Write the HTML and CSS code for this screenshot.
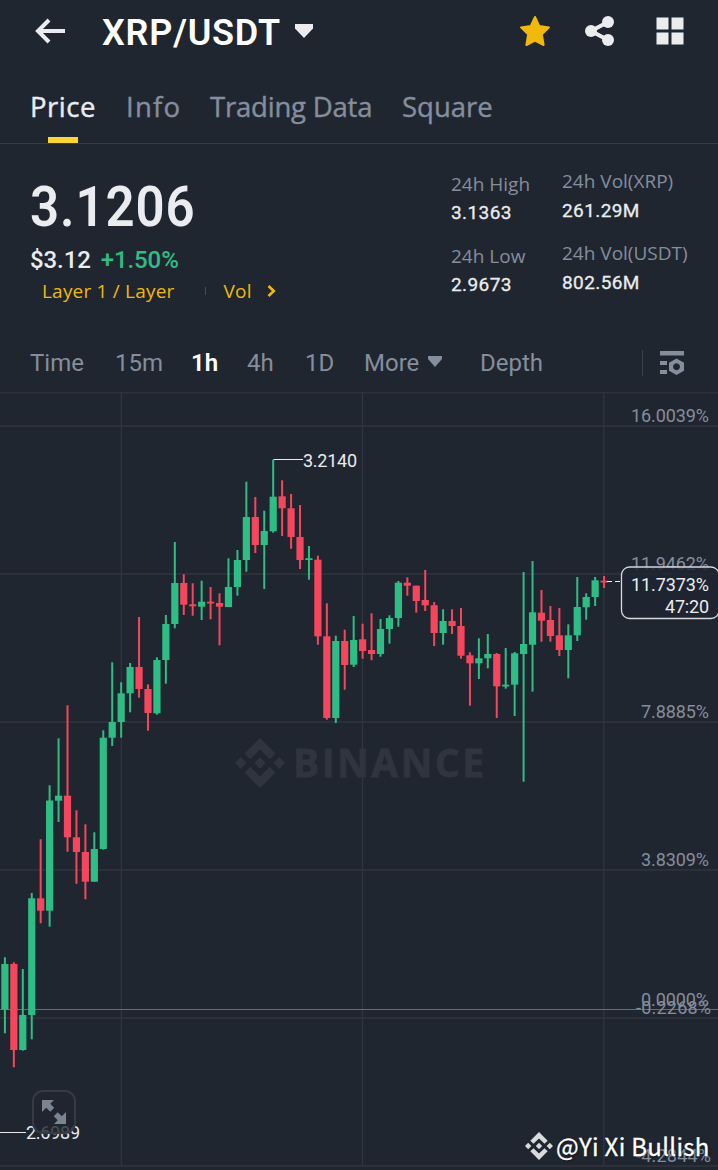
FILE: index.html
```html
<!DOCTYPE html>
<html lang="en">
<head>
    <meta charset="UTF-8">
    <meta name="viewport" content="width=device-width, initial-scale=1.0">
    <title>XRP/USDT</title>
    <link rel="stylesheet" href="styles.css">
</head>
<body>

    <!-- Header -->
    <header class="header">
        <svg class="back" width="32" height="26" viewBox="0 0 32 26">
            <path d="M31 13H4M15 2L4 13L15 24" fill="none" stroke="#eaecef" stroke-width="4"/>
        </svg>
        <h1>XRP/USDT</h1>
        <svg class="caret" width="18" height="14" viewBox="0 0 18 14">
            <path d="M0 0H18V4.5L9 14L0 4.5Z" fill="#eaecef"/>
        </svg>
        <div class="header-icons">
            <svg width="32" height="32" viewBox="0 0 32 32">
                <path d="M16 2L20.2 11L30 12.4L22.9 19.3L24.6 30L16 25.6L7.4 30L9.1 19.3L2 12.4L11.8 11Z" fill="#f0b90b" stroke="#f0b90b" stroke-width="2" stroke-linejoin="round"/>
            </svg>
            <svg width="30" height="30" viewBox="0 0 30 30">
                <path d="M23 6L6 15L23 24" fill="none" stroke="#eaecef" stroke-width="4"/>
                <circle cx="23" cy="6" r="6" fill="#eaecef"/>
                <circle cx="6" cy="15" r="6" fill="#eaecef"/>
                <circle cx="23" cy="24" r="6" fill="#eaecef"/>
            </svg>
            <svg width="28" height="28" viewBox="0 0 28 28">
                <path d="M.5 .5h12v12h-12zM15.5 .5h12v12h-12zM.5 15.5h12v12h-12zM15.5 15.5h12v12h-12z" fill="#eaecef"/>
            </svg>
        </div>
    </header>

    <!-- Tabs -->
    <nav class="tabs">
        <a class="active">Price</a>
        <a class="tab-info">Info</a>
        <a class="tab-trading">Trading Data</a>
        <a>Square</a>
    </nav>

    <!-- Price and 24h stats -->
    <section class="summary">
        <div class="price-box">
            <div class="price">3.1206</div>
            <div class="change"><span class="fiat">$3.12</span><span class="up">+1.50%</span></div>
            <div class="tags">
                <span>Layer 1 / Layer</span>
                <i></i>
                <span>Vol</span>
                <svg width="9" height="12" viewBox="0 0 9 12">
                    <path d="M1.5 1L6.8 6L1.5 11" fill="none" stroke="#f0b90b" stroke-width="2.6"/>
                </svg>
            </div>
        </div>
        <dl class="stats">
            <dt>24h High</dt>
            <dd>3.1363</dd>
            <dt>24h Low</dt>
            <dd>2.9673</dd>
        </dl>
        <dl class="stats stats-vol">
            <dt>24h Vol(XRP)</dt>
            <dd>261.29M</dd>
            <dt>24h Vol(USDT)</dt>
            <dd>802.56M</dd>
        </dl>
    </section>

    <!-- Intervals -->
    <div class="intervals">
        <span>Time</span>
        <span>15m</span>
        <span class="active">1h</span>
        <span>4h</span>
        <span>1D</span>
        <span class="more">More
            <svg width="14" height="11" viewBox="0 0 14 11">
                <path d="M0 0H14V3L7 11L0 3Z" fill="#848e9c"/>
            </svg>
        </span>
        <span>Depth</span>
        <div class="settings">
            <svg width="26" height="26" viewBox="0 0 26 26" fill="#848e9c">
                <path d="M1 1h24v4.500h-24zM1 11h7v4h-7zM1 20h7v4h-7z"/>
                <path fill-rule="evenodd" d="M17.500 8.500L25 12.700V20.800L17.500 25L10 20.800V12.700ZM17.500 13.300a3.500 3.500 0 1 0 .01 0Z"/>
            </svg>
        </div>
    </div>

    <!-- Chart -->
    <main class="chart">
        <svg width="718" height="778" viewBox="0 392 718 778">
            <g class="grid">
                <path d="M0 392.500H718M0 426H718M0 574H718M0 722H718M0 870H718M0 1018H718M0 1166H718"/>
                <path class="col" d="M121.300 392V1166M362.500 392V1166M603.800 392V1166"/>
            </g>

            <g class="brand">
                <g transform="translate(235 738)">
                    <path d="M25 0L40.500 15.500L34.800 21.200L25 11.400L15.200 21.200L9.500 15.500ZM25 50L40.500 34.500L34.800 28.800L25 38.600L15.200 28.800L9.500 34.500ZM25 19.300L30.700 25L25 30.700L19.300 25ZM5.700 19.300L11.400 25L5.700 30.700L0 25ZM44.300 19.300L50 25L44.300 30.700L38.600 25Z"/>
                </g>
                <text x="293" y="777" textLength="191">BINANCE</text>
            </g>

            <path class="zero" d="M0 1009.500H718"/>
            <g id="candles"></g>

            <path class="mark" d="M273.500 459.500H303M0 1132.500H26"/>
            <text class="mark-text" x="303" y="467" textLength="54">3.2140</text>
            <text class="mark-text" x="26" y="1139" textLength="54">2.6989</text>

            <g class="axis">
                <text x="631" y="422" textLength="78">16.0039%</text>
                <text x="631" y="569.500" textLength="78">11.9462%</text>
                <text x="641" y="718" textLength="68">7.8885%</text>
                <text x="641" y="866" textLength="68">3.8309%</text>
                <text x="641" y="1006" textLength="68">0.0000%</text>
                <text x="636" y="1014" textLength="75">-0.2268%</text>
                <text x="636" y="1162" textLength="75">-4.2844%</text>
            </g>

            <path class="last-line" d="M607 581.500H621"/>
            <rect class="last-box" x="621.500" y="567" width="97.500" height="51.500" rx="8"/>
            <text class="last-text" x="631" y="591" textLength="78">11.7373%</text>
            <text class="last-text" x="665" y="613" textLength="44">47:20</text>
        </svg>

        <div class="expand">
            <svg width="24" height="24" viewBox="0 0 24 24">
                <path d="M0 0H12L8.300 3.700L12.200 7.800L8.300 11.700L4.200 7.800L0 12ZM24 24H12L15.700 20.300L11.800 16.200L15.700 12.300L19.800 16.200L24 12Z" fill="#7b8491"/>
            </svg>
        </div>

        <div class="author">
            <svg width="28" height="28" viewBox="0 0 50 50">
                <path fill="#d9dadb" d="M25 0L40.500 15.500L34.800 21.200L25 11.400L15.200 21.200L9.500 15.500ZM25 50L40.500 34.500L34.800 28.800L25 38.600L15.200 28.800L9.500 34.500ZM25 19.300L30.700 25L25 30.700L19.300 25ZM5.700 19.300L11.400 25L5.700 30.700L0 25ZM44.300 19.300L50 25L44.300 30.700L38.600 25Z"/>
            </svg>
            <span>@Yi Xi Bullish</span>
        </div>
    </main>

    <script src="chart.js"></script>
</body>
</html>
```
FILE: styles.css
```css
* {
    box-sizing: border-box;
}

body {
    margin: 0;
    width: 718px;
    height: 1170px;
    overflow: hidden;
    background: #202630;
    color: #eaecef;
    font-family: 'Open Sans', sans-serif;
}

svg {
    display: block;
}

/* Header */
.header {
    display: flex;
    align-items: center;
    height: 62px;
    padding: 0 34px;
}

.header h1 {
    margin: 4px 15px 0 36px;
    width: 178px;
    font-family: Roboto, sans-serif;
    font-size: 36px;
    font-weight: 600;
    line-height: 40px;
    letter-spacing: 0.8px;
    color: #fff;
    white-space: nowrap;
}

.header-icons {
    display: flex;
    align-items: center;
    margin-left: auto;
}

.header-icons svg:nth-child(2) {
    margin: 0 41px 0 34px;
}

/* Tabs */
.tabs {
    display: grid;
    grid-template-columns: 96px 84px 192px auto;
    height: 82px;
    padding-left: 30px;
    border-bottom: 1px solid #343b47;
    font-size: 27.5px;
    font-weight: 500;
    line-height: 90px;
    color: #848e9c;
    -webkit-text-stroke: 0.4px;
}

.tabs a {
    position: relative;
    height: 81px;
    white-space: nowrap;
}

.tabs .active {
    color: #eaecef;
    letter-spacing: 0.5px;
}

.tab-info {
    letter-spacing: 1.2px;
}

.tab-trading {
    letter-spacing: -0.2px;
}

.tabs .active::after {
    content: '';
    position: absolute;
    left: 18px;
    bottom: 0;
    width: 30px;
    height: 6px;
    background: #fcd535;
}

/* Price */
.summary {
    display: grid;
    grid-template-columns: 421px 111px auto;
    height: 190px;
    padding-left: 30px;
}

.price {
    height: 66px;
    margin-top: 30px;
    font: 600 56px/66px Roboto, sans-serif;
    letter-spacing: 1px;
    transform: scaleX(0.91);
    transform-origin: left;
}

.change {
    display: flex;
    gap: 10px;
    height: 30px;
    margin-top: 5px;
    font: 500 24px/30px Roboto, sans-serif;
    letter-spacing: -0.1px;
}

.up {
    color: #2ebd85;
}

.tags {
    display: flex;
    align-items: center;
    height: 28px;
    margin: 2px 0 0 12px;
    font-size: 19px;
    letter-spacing: 0.2px;
    color: #f0b90b;
}

.tags i {
    width: 1px;
    height: 8px;
    margin: 0 18px 0 30px;
    background: #474d57;
}

.tags svg {
    margin-left: 15px;
}

.stats {
    margin: 26px 0 0;
    white-space: nowrap;
}

.stats-vol {
    margin-top: 23px;
}

.stats dt {
    height: 29px;
    font-size: 19px;
    line-height: 28px;
    color: #848e9c;
}

.stats dd {
    height: 28px;
    margin: 0 0 15px;
    font: 19px/28px Roboto, sans-serif;
    letter-spacing: 0.4px;
    -webkit-text-stroke: 0.3px;
}

.stats-vol dt {
    height: 30px;
}

.stats-vol dd {
    height: 27px;
}

/* Intervals */
.intervals {
    display: grid;
    grid-template-columns: 85px 76px 56px 58px 59px 116px 162px auto;
    align-items: center;
    height: 58px;
    padding-left: 30px;
    font: 24px/58px Roboto, sans-serif;
    color: #848e9c;
}

.intervals .active {
    font-weight: 600;
    color: #fff;
}

.more {
    display: flex;
    align-items: center;
    gap: 9px;
}

.more svg {
    margin-top: -4px;
}

.settings {
    height: 26px;
    padding-left: 16px;
    border-left: 1px solid #3a424f;
}

/* Chart */
.chart {
    position: relative;
    height: 778px;
    font-family: Roboto, sans-serif;
}

.grid path {
    fill: none;
    stroke: #2b303b;
    stroke-width: 2;
}

.grid .col {
    stroke-width: 1.3;
    stroke: #2f3541;
}

.zero {
    stroke: #666c7a;
    stroke-width: 1;
}

.brand {
    fill: #2f343f;
    font-family: 'Open Sans', sans-serif;
    font-size: 39px;
    font-weight: 700;
}

.brand text {
    stroke: #2f343f;
    stroke-width: 0.8;
}

.up-candle {
    fill: #2ebd85;
}

.down-candle {
    fill: #f6465d;
}

.mark {
    fill: none;
    stroke: #eaecef;
    stroke-width: 1.2;
}

.mark-text,
.last-text {
    fill: #eaecef;
    font-size: 18px;
}

.axis {
    fill: #848e9c;
    font-size: 18px;
}

.last-line {
    stroke: #eaecef;
    stroke-dasharray: 5 3;
}

.last-box {
    fill: #202630;
    fill-opacity: 0.85;
    stroke: #d5d8dc;
    stroke-width: 1.3;
}

.expand {
    position: absolute;
    left: 32px;
    top: 698px;
    width: 44px;
    height: 44px;
    padding: 8px;
    border: 2px solid #343b47;
    border-radius: 11px;
    background: rgba(32, 38, 48, 0.8);
}

.author {
    position: absolute;
    left: 525px;
    top: 736px;
    display: flex;
    align-items: center;
    gap: 3px;
    height: 36px;
    font: 24px/36px 'Noto Sans CJK SC', sans-serif;
    letter-spacing: 0.3px;
    color: #fff;
    -webkit-text-stroke: 0.3px;
    white-space: nowrap;
    text-shadow: 1px 1px 2px rgba(0, 0, 0, 0.5);
}
```
FILE: chart.js
```js
// [up, high, open/close top, open/close bottom, low]
const candles = [
    [1, 957.3, 964, 1009.7, 1033.3],
    [0, 962.3, 964, 1050, 1067.3],
    [1, 969, 1015, 1050, 1050.7],
    [1, 893, 898.3, 1015, 1039.3],
    [0, 839.3, 898.3, 910.7, 923.3],
    [1, 785.3, 800.5, 910.7, 926.7],
    [1, 738.3, 795.7, 800.7, 822],
    [0, 705.3, 795.7, 837.3, 851.7],
    [0, 810.3, 837.3, 852, 883.7],
    [0, 824.3, 852, 881.7, 899.3],
    [1, 832.3, 849, 881.7, 881.7],
    [1, 730.3, 737.7, 849, 849.7],
    [1, 662.3, 722, 737.7, 746],
    [1, 682.3, 693.3, 722, 737.7],
    [1, 663, 667, 693.3, 712.3],
    [0, 617, 667, 689, 697.7],
    [0, 684.3, 689, 713, 730.7],
    [1, 657.3, 660, 713.3, 714.7],
    [1, 615, 624, 660, 683.7],
    [1, 542, 583, 624, 628.3],
    [0, 574.3, 583, 604.7, 615],
    [0, 583.3, 604.3, 606.3, 615.7],
    [1, 580.7, 601.7, 606.7, 620],
    [0, 587, 601.7, 603.5, 619.3],
    [0, 593.3, 603, 606.7, 645.3],
    [1, 558.3, 587, 607, 607],
    [1, 550, 560, 587, 595.7],
    [1, 481.7, 517, 560, 571.7],
    [0, 497, 517, 545, 553],
    [1, 510.7, 531, 545, 589],
    [1, 459.7, 496.7, 531.3, 532.7],
    [0, 480.3, 496.3, 508.3, 536],
    [0, 494, 508.3, 537, 548.7],
    [0, 505, 537, 560, 569],
    [1, 546, 558.2, 560, 579.7],
    [0, 555.7, 559.7, 636.3, 644.7],
    [0, 603.3, 636.3, 718, 719.7],
    [1, 635.7, 641, 718, 723],
    [0, 629.7, 641, 665, 689.7],
    [1, 616, 640, 664.7, 667],
    [0, 623.7, 639.3, 651, 658.7],
    [0, 613.3, 650, 654, 660.3],
    [1, 619, 629, 654, 656.7],
    [1, 615.3, 618, 629, 643.7],
    [1, 581, 582.7, 618, 626.7],
    [0, 577.3, 582.7, 585.7, 595.7],
    [0, 585.7, 585.7, 601, 612.7],
    [0, 570, 600, 605.3, 611],
    [0, 602, 605.3, 633, 646],
    [1, 609.3, 621, 633, 644.7],
    [0, 609.3, 621, 626, 634],
    [0, 608, 626, 655.7, 658.7],
    [0, 652.3, 655.3, 663.3, 705.7],
    [1, 638.3, 658.3, 663.3, 679],
    [1, 634, 654, 658.3, 668.3],
    [0, 653, 654, 686.3, 718],
    [1, 648, 684.7, 686.5, 688.7],
    [1, 652, 653.3, 684.7, 716],
    [1, 572, 644, 654, 781.7],
    [1, 561, 612.3, 644.7, 691.7],
    [0, 590, 612.7, 620.7, 641.7],
    [0, 606, 620, 636, 641.7],
    [0, 608, 635.3, 650, 656],
    [1, 624.3, 635.3, 650, 678.3],
    [1, 577, 607, 635.3, 641],
    [1, 593.3, 597, 607.3, 619.7],
    [1, 577, 580.3, 597, 606],
    [0, 576, 580.7, 582.5, 588]
];

const step = 8.943;
const group = document.getElementById('candles');

function bar(x, y, width, height, name) {
    const rect = document.createElementNS('http://www.w3.org/2000/svg', 'rect');
    rect.setAttribute('x', x - width / 2);
    rect.setAttribute('y', y);
    rect.setAttribute('width', width);
    rect.setAttribute('height', height);
    rect.setAttribute('class', name);
    group.appendChild(rect);
}

candles.forEach(([up, high, top, bottom, low], i) => {
    const x = 4.9 + i * step;
    const name = up ? 'up-candle' : 'down-candle';
    bar(x, high, 2, low - high, name);
    bar(x, top, 7.2, bottom - top, name);
});
```
